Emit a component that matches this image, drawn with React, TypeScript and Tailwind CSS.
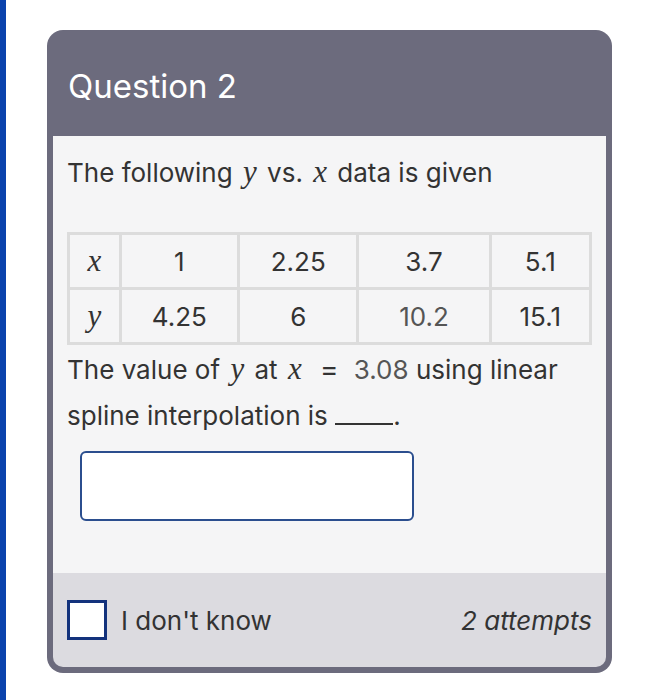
import React from 'react';

// ─── Data ───────────────────────────────────────────────────────────
const xs = ['1', '2.25', '3.7', '5.1'];
const ys = ['4.25', '6', '10.2', '15.1'];
const colW = ['w-[119px]', 'w-[120px]', 'w-[133px]', 'w-[101px]'];

function M({ children }: { children: React.ReactNode }) {
  return (
    <span className="mx-[3px] italic text-[31px] leading-none" style={{ fontFamily: '"Liberation Serif", "DejaVu Serif", serif' }}>
      {children}
    </span>
  );
}

function Row({ head, cells }: { head: string; cells: string[] }) {
  return (
    <tr className="h-[55px]">
      <td className="w-[52px] border-[3px] border-[#dcdcdc] text-center">
        <M>{head}</M>
      </td>
      {cells.map((c, i) => (
        <td
          key={i}
          className={`${colW[i]} border-[3px] border-[#dcdcdc] text-center ${c === '10.2' ? 'text-[#555]' : ''}`}
        >
          {c}
        </td>
      ))}
    </tr>
  );
}

export default function App() {
  return (
    <div
      className="flex h-[700px] w-[649px] bg-white text-[#333] overflow-hidden"
      style={{ fontFamily: 'Inter, "Noto Sans", sans-serif' }}
    >
      <div className="w-[6px] shrink-0 bg-[#0b43ad]" />

      <div className="ml-[41px] mt-[30px] h-[643px] w-[565px] rounded-[16px] bg-[#6c6b7d] px-[6px] pb-[6px] flex flex-col">
        {/* header */}
        <div className="h-[106px] shrink-0 pl-[15px] pt-[40px] text-[33px] leading-none text-white">
          Question 2
        </div>

        {/* body */}
        <div className="flex-1 bg-[#f5f5f6] px-[14px] pt-[20px] text-[26px]">
          <p className="leading-[34px]">
            The following <M>y</M> vs. <M>x</M> data is given
          </p>

          <table className="mt-[42px] border-collapse text-[26px]">
            <tbody>
              <Row head="x" cells={xs} />
              <Row head="y" cells={ys} />
            </tbody>
          </table>

          <p className="mt-[1px] leading-[46px]">
            The value of <M>y</M> at <M>x</M> <span className="text-[28px] mx-[8px]">=</span>{' '}
            <span className="text-[#555]">3.08</span> using linear spline interpolation is{' '}
            <span className="inline-block w-[58px] border-b-2 border-[#333] align-baseline" />.
          </p>

          <div className="ml-[13px] mt-[12px] h-[70px] w-[334px] rounded-[6px] border-2 border-[#2b4e8e] bg-white" />
        </div>

        {/* footer */}
        <div className="h-[94px] shrink-0 rounded-b-[10px] bg-[#dcdbe0] px-[14px] flex items-center justify-between text-[26px]">
          <div className="flex items-center gap-[14px]">
            <div className="h-[40px] w-[40px] border-[3px] border-[#13327c] bg-white" />
            <span>I don't know</span>
          </div>
          <span className="italic">2 attempts</span>
        </div>
      </div>
    </div>
  );
}
